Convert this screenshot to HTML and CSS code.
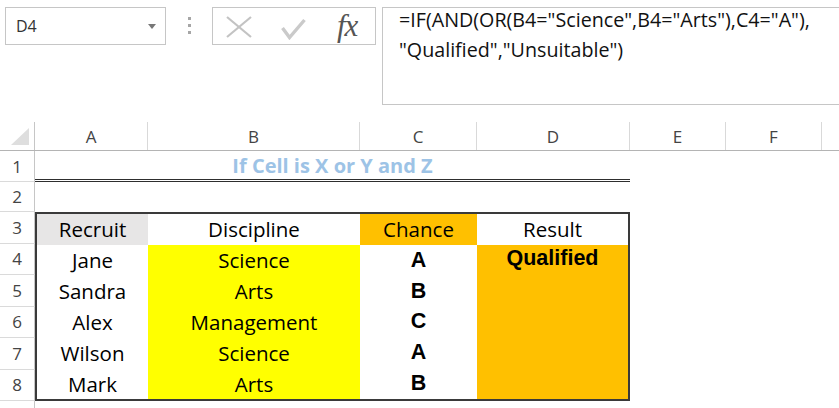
FILE: index.html
```html
<!DOCTYPE html>
<html>
    <head>
        <link rel="stylesheet" href="styles.css">
    </head>

    <body>
        <div class="toolbar">
            <div class="name-box">
                <span>D4</span>
                <span class="arrow"></span>
            </div>

            <div class="grip"><i></i><i></i><i></i></div>

            <div class="fx-buttons">
                <svg class="icon-cancel" width="26" height="22" viewBox="0 0 26 22">
                    <line x1="1" y1="1" x2="25" y2="21"/>
                    <line x1="25" y1="1" x2="1" y2="21"/>
                </svg>
                <svg class="icon-enter" width="25" height="22" viewBox="0 0 25 22">
                    <polyline points="1.5,10 8.5,19.5 23.5,2"/>
                </svg>
                <span class="fx">fx</span>
            </div>

            <div class="formula">
                <div class="formula-text">=IF(AND(OR(B4="Science",B4="Arts"),C4="A"),<br>"Qualified","Unsuitable")</div>
            </div>
        </div>

        <div class="sheet">
            <div class="col-heads">
                <div class="corner"><span class="corner-mark"></span></div>
                <div class="col-head col-a">A</div>
                <div class="col-head col-b">B</div>
                <div class="col-head col-c">C</div>
                <div class="col-head col-d">D</div>
                <div class="col-head col-e">E</div>
                <div class="col-head col-f">F</div>
                <div class="col-head col-rest"></div>
            </div>

            <div class="sheet-body">
                <div class="row-heads">
                    <div class="row-head row-1">1</div>
                    <div class="row-head row-2">2</div>
                    <div class="row-head">3</div>
                    <div class="row-head">4</div>
                    <div class="row-head">5</div>
                    <div class="row-head">6</div>
                    <div class="row-head">7</div>
                    <div class="row-head">8</div>
                    <div class="row-head row-rest"></div>
                </div>

                <div class="cells">
                    <div class="title">If Cell is X or Y and Z</div>
                    <div class="blank-row"></div>

                    <div class="data">
                        <div class="cell gray">Recruit</div>
                        <div class="cell">Discipline</div>
                        <div class="cell orange">Chance</div>
                        <div class="cell">Result</div>

                        <div class="cell">Jane</div>
                        <div class="cell yellow">Science</div>
                        <div class="cell grade">A</div>
                        <div class="cell orange result">Qualified</div>

                        <div class="cell">Sandra</div>
                        <div class="cell yellow">Arts</div>
                        <div class="cell grade">B</div>
                        <div class="cell orange"></div>

                        <div class="cell">Alex</div>
                        <div class="cell yellow">Management</div>
                        <div class="cell grade">C</div>
                        <div class="cell orange"></div>

                        <div class="cell">Wilson</div>
                        <div class="cell yellow">Science</div>
                        <div class="cell grade">A</div>
                        <div class="cell orange"></div>

                        <div class="cell">Mark</div>
                        <div class="cell yellow">Arts</div>
                        <div class="cell grade">B</div>
                        <div class="cell orange"></div>
                    </div>
                </div>
            </div>
        </div>
    </body>
</html>
```

FILE: styles.css
```css
body {
    margin: 0;
    padding: 0;
    background-color: #ffffff;
    font-family: "Open Sans", sans-serif;
    color: #000;
    overflow: hidden;
}

/* formula bar */

.toolbar {
    height: 122px;
    box-sizing: border-box;
    padding: 7px 0 0 5px;
    display: flex;
    align-items: flex-start;
}

.name-box {
    width: 161px;
    height: 38px;
    box-sizing: border-box;
    border: 1px solid #c6c6c6;
    padding: 0 9px 0 10px;
    display: flex;
    align-items: center;
    justify-content: space-between;
    font-size: 16px;
    color: #333;
}

.arrow {
    width: 0;
    height: 0;
    border-left: 4.5px solid transparent;
    border-right: 4.5px solid transparent;
    border-top: 5px solid #777;
}

.grip {
    margin: 10px 0 0 22px;
    width: 3px;
    display: flex;
    flex-direction: column;
    gap: 4px;
}

.grip i {
    display: block;
    width: 3px;
    height: 3px;
    background-color: #a6a6a6;
}

.fx-buttons {
    margin-left: 21px;
    width: 164px;
    height: 38px;
    box-sizing: border-box;
    border: 1px solid #c6c6c6;
    padding-left: 13px;
    display: flex;
    align-items: center;
}

.icon-cancel {
    margin-top: 2px;
}

.icon-cancel line {
    stroke: #c3c3c3;
    stroke-width: 2.2;
}

.icon-enter {
    margin: 6px 0 0 29px;
}

.icon-enter polyline {
    fill: none;
    stroke: #cacaca;
    stroke-width: 3.4;
}

.fx {
    margin-left: 31px;
    font-family: "Liberation Serif", serif;
    font-style: italic;
    font-size: 31px;
    color: #555;
    letter-spacing: -1px;
}

.formula {
    margin-left: 6px;
    margin-right: -4px;
    flex: 1;
    height: 98px;
    box-sizing: border-box;
    border: 1px solid #c6c6c6;
    padding-left: 16px;
    font-size: 19.7px;
    line-height: 30px;
    color: #111;
}

.formula-text {
    margin-top: -3px;
    white-space: nowrap;
}

/* sheet */

.col-heads {
    height: 28px;
    display: flex;
    border-bottom: 1px solid #b4b4b4;
}

.corner {
    width: 35px;
    box-sizing: border-box;
    border-right: 1px solid #c6c6c6;
    display: flex;
    align-items: flex-end;
    justify-content: flex-end;
    padding: 0 5px 5px 0;
}

.corner-mark {
    width: 0;
    height: 0;
    border-left: 18px solid transparent;
    border-bottom: 17px solid #dedede;
}

.col-head {
    box-sizing: border-box;
    border-right: 1px solid #d9d9d9;
    display: flex;
    align-items: center;
    justify-content: center;
    font-size: 17px;
    color: #444;
}

.col-a { width: 113px; }
.col-b { width: 212px; }
.col-c { width: 117px; }
.col-d { width: 153px; }
.col-e { width: 96px; }
.col-f { width: 96px; }
.col-rest { flex: 1; border-right: none; }

.sheet-body {
    display: flex;
}

.row-heads {
    width: 35px;
    display: flex;
    flex-direction: column;
}

.row-head {
    height: 31.5px;
    box-sizing: border-box;
    border-right: 1px solid #c6c6c6;
    border-bottom: 1px solid #dadada;
    display: flex;
    align-items: center;
    justify-content: center;
    font-size: 17px;
    color: #444;
}

.row-1 { height: 31px; }
.row-2 { height: 30px; }
.row-rest { height: 20px; border-bottom: none; }

.cells {
    width: 595px;
    display: flex;
    flex-direction: column;
}

.title {
    height: 31px;
    box-sizing: border-box;
    border-bottom: 3px double #2e2e2e;
    display: flex;
    align-items: center;
    justify-content: center;
    font-size: 20px;
    font-weight: bold;
    color: #9dc3e6;
}

.blank-row {
    height: 30px;
}

.data {
    height: 189px;
    box-sizing: border-box;
    border: 2px solid #3a3a3a;
    display: grid;
    grid-template-columns: 111px 212px 117px 1fr;
    grid-template-rows: repeat(6, 1fr);
}

.cell {
    display: flex;
    align-items: center;
    justify-content: center;
    padding-top: 0;
    font-size: 20.5px;
    background-color: #ffffff;
}

.gray {
    background-color: #e7e6e6;
}

.yellow {
    background-color: #ffff00;
}

.orange {
    background-color: #ffc000;
}

.grade,
.result {
    font-family: "Liberation Sans", Arial, sans-serif;
    font-weight: bold;
    font-size: 21.5px;
}

.result {
    padding-bottom: 3px;
}
```
